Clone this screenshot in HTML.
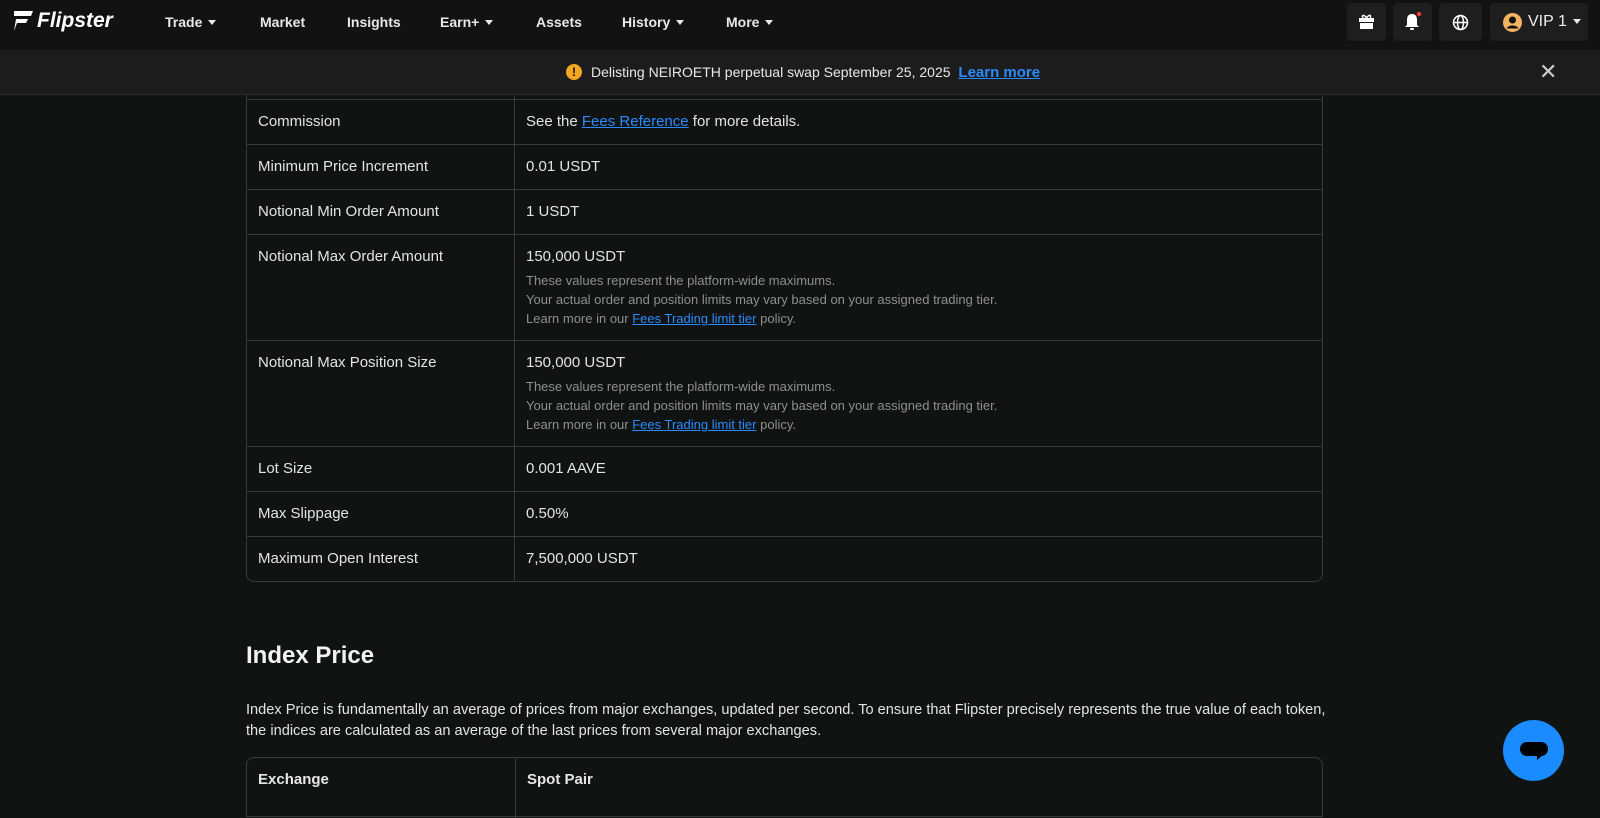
<!DOCTYPE html>
<html><head><meta charset="utf-8"><style>
*{margin:0;padding:0;box-sizing:border-box}
body{width:1600px;height:803px;overflow:hidden;background:#111212;font-family:"Liberation Sans",sans-serif;color:#e6e6e6;position:relative}
.hdr{position:absolute;top:0;left:0;width:1600px;height:50px;background:#121212}
.nav{position:absolute;top:14px;font-size:14px;font-weight:bold;color:#e8e8e8}
.tri{display:inline-block;width:0;height:0;border-left:4px solid transparent;border-right:4px solid transparent;border-top:5px solid #e8e8e8;margin-left:6px;vertical-align:2px}
.ib{position:absolute;top:3px;height:38px;background:#1e1e1e;border-radius:4px}
.ban{position:absolute;top:50px;left:0;width:1600px;height:45px;background:#1c1c1c;border-bottom:1px solid #2a2a2a}
table{position:absolute;left:246px;width:1077px;border-collapse:separate;border-spacing:0;font-size:15px}
td{border-right:1px solid #3a3a3a;border-bottom:1px solid #3a3a3a;padding:13px 11px 0;vertical-align:top;color:#e4e4e4}
td:first-child{border-left:1px solid #3a3a3a;width:269px}
.n{font-size:13px;color:#8f8f8f;line-height:19px;margin-top:6px}
a{color:#2a8cff;text-decoration:underline}
</style></head><body>
<div class="hdr">
<svg style="position:absolute;left:12px;top:10px" width="22" height="22" viewBox="0 0 22 22"><path d="M2 1h19l-2 5H2z M2 9h14l-2 4H5l-3 8 2-12z" fill="#fff"/></svg>
<div style="position:absolute;left:37px;top:9px;font-size:21px;font-weight:bold;font-style:italic;color:#fff">Flipster</div>
<div class="nav" style="left:165px">Trade<span class="tri"></span></div>
<div class="nav" style="left:260px">Market</div>
<div class="nav" style="left:347px">Insights</div>
<div class="nav" style="left:440px">Earn+<span class="tri"></span></div>
<div class="nav" style="left:536px">Assets</div>
<div class="nav" style="left:622px">History<span class="tri"></span></div>
<div class="nav" style="left:726px">More<span class="tri"></span></div>
<div class="ib" style="left:1347px;width:39px"><svg style="position:absolute;left:11px;top:10px" width="17" height="17" viewBox="0 0 17 17"><rect x="1" y="5" width="15" height="4" fill="#fff"/><rect x="2" y="10" width="13" height="6" fill="#fff"/><path d="M8.5 5C6 1 3 2 5 5M8.5 5C11 1 14 2 12 5" stroke="#fff" fill="none" stroke-width="1.5"/></svg></div>
<div class="ib" style="left:1393px;width:39px"><svg style="position:absolute;left:11px;top:9px" width="18" height="20" viewBox="0 0 18 20"><path d="M8 2C4 2 3 5 3 8v5l-2 2h14l-2-2V8c0-3-1-6-5-6z" fill="#fff"/><rect x="6" y="16" width="4" height="2" rx="1" fill="#fff"/><circle cx="15" cy="2" r="2.2" fill="#ff3b3b"/></svg></div>
<div class="ib" style="left:1439px;width:43px"><svg style="position:absolute;left:13px;top:11px" width="17" height="17" viewBox="0 0 17 17" fill="none" stroke="#fff" stroke-width="1.5"><circle cx="8.5" cy="8.5" r="7"/><ellipse cx="8.5" cy="8.5" rx="3" ry="7"/><path d="M1.5 8.5h14"/></svg></div>
<div class="ib" style="left:1490px;width:98px"><svg style="position:absolute;left:13px;top:10px" width="19" height="19" viewBox="0 0 19 19"><circle cx="9.5" cy="9.5" r="9.5" fill="#f3b563"/><circle cx="9.5" cy="7" r="3.5" fill="#111"/><path d="M3.5 15.5c2-4 10-4 12 0" fill="#111"/></svg><span style="position:absolute;left:38px;top:10px;font-size:16px;color:#eee">VIP 1<span class="tri"></span></span></div>
</div>
<div class="ban">
<div style="position:absolute;left:566px;top:14px;width:16px;height:16px;border-radius:50%;background:#f5a623;color:#111;font-size:12px;font-weight:bold;text-align:center;line-height:16px">!</div>
<div style="position:absolute;left:591px;top:14px;font-size:14px;color:#e8e8e8">Delisting NEIROETH perpetual swap September 25, 2025 <a style="margin-left:4px;font-weight:bold;font-size:15px">Learn more</a></div>
<div style="position:absolute;left:1539px;top:9px;font-size:22px;color:#ccc">✕</div>
</div>
<table style="top:95px">
<tr style="height:5px"><td style="padding:0"></td><td style="padding:0"></td></tr>
<tr style="height:45px"><td>Commission</td><td>See the <a>Fees Reference</a> for more details.</td></tr>
<tr style="height:45px"><td>Minimum Price Increment</td><td>0.01 USDT</td></tr>
<tr style="height:45px"><td>Notional Min Order Amount</td><td>1 USDT</td></tr>
<tr style="height:106px"><td>Notional Max Order Amount</td><td>150,000 USDT<div class="n">These values represent the platform-wide maximums.<br>Your actual order and position limits may vary based on your assigned trading tier.<br>Learn more in our <a>Fees Trading limit tier</a> policy.</div></td></tr>
<tr style="height:106px"><td>Notional Max Position Size</td><td>150,000 USDT<div class="n">These values represent the platform-wide maximums.<br>Your actual order and position limits may vary based on your assigned trading tier.<br>Learn more in our <a>Fees Trading limit tier</a> policy.</div></td></tr>
<tr style="height:45px"><td>Lot Size</td><td>0.001 AAVE</td></tr>
<tr style="height:45px"><td>Max Slippage</td><td>0.50%</td></tr>
<tr style="height:45px"><td style="border-bottom-left-radius:8px">Maximum Open Interest</td><td style="border-bottom-right-radius:8px">7,500,000 USDT</td></tr>
</table>
<div style="position:absolute;left:246px;top:642px;font-size:24px;font-weight:bold;color:#f2f2f2">Index Price</div>
<div style="position:absolute;left:246px;top:700px;white-space:nowrap;font-size:14.6px;line-height:21px;color:#e4e4e4">Index Price is fundamentally an average of prices from major exchanges, updated per second. To ensure that Flipster precisely represents the true value of each token,<br>the indices are calculated as an average of the last prices from several major exchanges.</div>
<div style="position:absolute;left:246px;top:757px;width:1077px;height:60px;border:1px solid #3a3a3a;border-radius:8px 8px 0 0;font-size:15px;font-weight:bold">
<div style="position:absolute;left:11px;top:13px">Exchange</div>
<div style="position:absolute;left:268px;top:0;width:1px;height:60px;background:#3a3a3a"></div>
<div style="position:absolute;left:280px;top:13px">Spot Pair</div>
</div>
<div style="position:absolute;left:1503px;top:720px;width:61px;height:61px;border-radius:50%;background:#1a8cff">
<div style="position:absolute;left:17px;top:22px;width:28px;height:14px;border-radius:7px;background:#000"></div>
<div style="position:absolute;left:34px;top:35px;width:0;height:0;border-left:6px solid #000;border-bottom:5px solid transparent"></div>
</div>
</body></html>
